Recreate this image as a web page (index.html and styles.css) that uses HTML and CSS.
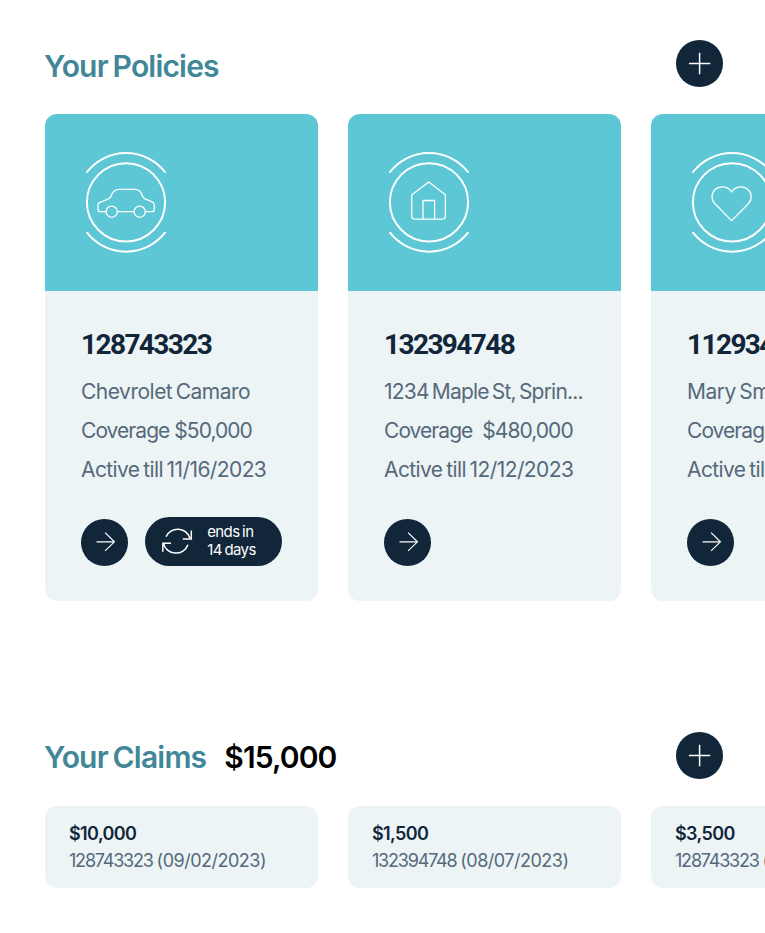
FILE: index.html
```html
<!DOCTYPE html>
<html lang="en">
<head>
  <meta charset="UTF-8" />
  <meta name="viewport" content="width=device-width, initial-scale=1.0" />
  <title>Your Policies</title>
  <link rel="stylesheet" href="styles.css">
</head>
<body>
  <svg class="sprite" aria-hidden="true">
    <symbol id="ring" viewBox="0 0 90 104">
      <circle cx="45" cy="52.3" r="39.1" />
      <path d="M6 22a49.5 49.5 0 0 1 78 0M6 82.7a49.5 49.5 0 0 0 78 0" stroke-linecap="round" />
    </symbol>
    <symbol id="arrow" viewBox="0 0 47 47">
      <path d="M15.7 23H33.5M24.3 13.8L33.7 23L24.3 32.2" />
    </symbol>
    <symbol id="plus" viewBox="0 0 47 47">
      <path d="M13 23.7H34.6M23.8 12.9V34.5" />
    </symbol>
  </svg>

  <main>
    <section class="policies">
      <header class="section-header">
        <h2>Your Policies</h2>
        <button class="round-btn" aria-label="Add policy"><svg><use href="#plus" /></svg></button>
      </header>
      <div class="card-row">
        <article class="policy-card">
          <div class="policy-top">
            <svg class="policy-icon" viewBox="0 0 90 104">
              <use href="#ring" />
              <g class="thin">
                <path d="M25 61.7H19.2Q17 61.7 17 59.5V54.7Q17 53.3 18.5 52.6L27.5 48.8Q29.4 48 30.2 45.8C31.7 41.5 34 39.4 38 39.4H54C58 39.4 60.2 41.5 61.3 45.8Q62 48.1 64 48.9L71.2 51.8Q73.3 52.7 73.3 54.8V59.5Q73.3 61.7 71 61.7H64.5M36.4 61.7H53" />
                <circle cx="30.7" cy="61.7" r="5.6" />
                <circle cx="58.7" cy="61.7" r="5.6" />
              </g>
            </svg>
          </div>
          <div class="policy-body">
            <h3>128743323</h3>
            <p class="name">Chevrolet Camaro</p>
            <p class="coverage">Coverage $50,000</p>
            <p class="active-till">Active till 11/16/2023</p>
            <div class="actions">
              <button class="round-btn" aria-label="Open policy"><svg><use href="#arrow" /></svg></button>
              <button class="renew-btn">
                <svg viewBox="0 0 32 28">
                  <path d="M5 9.8A12.6 11.9 0 0 1 28.9 11M30.3 3.6V12.1H21.8M26.9 17.8A12.6 11.9 0 0 1 2.5 16.3M10 16.3H1.8V24.8" />
                </svg>
                <span>ends in<br>14 days</span>
              </button>
            </div>
          </div>
        </article>

        <article class="policy-card">
          <div class="policy-top">
            <svg class="policy-icon" viewBox="0 0 90 104">
              <use href="#ring" />
              <path class="thin" d="M44.8 32L61.4 44.7V66Q61.4 69.2 58 69.2H31Q27.8 69.2 27.8 66V44.7ZM39 69.2V50.5H50.6V69.2" />
            </svg>
          </div>
          <div class="policy-body">
            <h3>132394748</h3>
            <p class="name address">1234 Maple St, Sprin...</p>
            <p class="coverage">Coverage&nbsp; $480,000</p>
            <p class="active-till">Active till 12/12/2023</p>
            <div class="actions">
              <button class="round-btn" aria-label="Open policy"><svg><use href="#arrow" /></svg></button>
            </div>
          </div>
        </article>

        <article class="policy-card">
          <div class="policy-top">
            <svg class="policy-icon" viewBox="0 0 90 104">
              <use href="#ring" />
              <path class="thin" d="M44.6 70.6L27.9 53.8C23.9 49.5 24.1 43.7 27.7 40C32.5 35.4 40.5 35.8 44.6 42C48.7 35.8 56.7 35.4 61.5 40C65.1 43.7 65.3 49.5 61.3 53.8Z" />
            </svg>
          </div>
          <div class="policy-body">
            <h3>112934857</h3>
            <p class="name">Mary Smith</p>
            <p class="coverage">Coverage $500,000</p>
            <p class="active-till">Active till 12/12/2023</p>
            <div class="actions">
              <button class="round-btn" aria-label="Open policy"><svg><use href="#arrow" /></svg></button>
            </div>
          </div>
        </article>
      </div>
    </section>

    <section class="claims">
      <header class="section-header">
        <h2>Your Claims</h2>
        <strong class="total">$15,000</strong>
        <button class="round-btn" aria-label="Add claim"><svg><use href="#plus" /></svg></button>
      </header>
      <div class="card-row">
        <article class="claim-card">
          <h4>$10,000</h4>
          <p>128743323 <span class="date">(09/02/2023)</span></p>
        </article>
        <article class="claim-card">
          <h4>$1,500</h4>
          <p>132394748 <span class="date">(08/07/2023)</span></p>
        </article>
        <article class="claim-card">
          <h4>$3,500</h4>
          <p>128743323 <span class="date">(06/11/2023)</span></p>
        </article>
      </div>
    </section>
  </main>
</body>
</html>
```
FILE: styles.css
```css
:root {
  --navy: #12263a;
  --teal: #418797;
  --aqua: #5dc7d6;
  --card: #ecf4f6;
  --muted: #56697a;
}
* {
  margin: 0;
  padding: 0;
  box-sizing: border-box;
}
body {
  font-family: Inter, 'Liberation Sans', sans-serif;
  background: #fff;
  color: var(--navy);
  overflow: hidden;
}
.sprite {
  display: none;
}
main {
  padding: 40px 0 0 45px;
  overflow: hidden;
}
svg {
  fill: none;
  stroke: #fff;
}
button {
  border: none;
  color: #fff;
  font-family: inherit;
  background: var(--navy);
  cursor: pointer;
}
.section-header {
  display: flex;
  align-items: center;
  height: 47px;
  margin-bottom: 27px;
  padding-right: 42px;
}
.section-header h2,
.total {
  font-size: 30px;
  font-weight: 600;
  line-height: 47px;
  padding-top: 5px;
}
.claims h2,
.claims .total {
  padding-top: 4px;
}
.section-header h2 {
  color: var(--teal);
  letter-spacing: -0.8px;
  word-spacing: -2px;
  margin-left: -1px;
}
.total {
  color: #000;
  margin-left: 18px;
  letter-spacing: -0.9px;
}
.round-btn {
  flex: none;
  width: 46.6px;
  height: 46.6px;
  border-radius: 50%;
}
.section-header .round-btn {
  margin-left: auto;
}
.round-btn svg {
  display: block;
  width: 100%;
  height: 100%;
  stroke-width: 1.5;
}
.actions .round-btn svg {
  stroke-width: 1.2;
}
.card-row {
  display: flex;
  gap: 30px;
}
.policy-card {
  flex: none;
  width: 273px;
  height: 487px;
  border-radius: 12px;
  background: var(--card);
  overflow: hidden;
}
.policy-top {
  height: 177px;
  padding: 36px;
  background: var(--aqua);
}
.policy-icon {
  display: block;
  width: 90px;
  height: 104px;
  stroke-width: 2;
}
.thin {
  stroke-width: 1.3;
  stroke-linejoin: round;
}
.policy-body {
  padding: 37px 36px 0;
}
.policy-body h3 {
  font-family: Roboto, sans-serif;
  font-size: 28px;
  font-weight: 700;
  line-height: 34px;
  letter-spacing: -1.6px;
  margin-bottom: 10px;
}
.policy-body p {
  color: var(--muted);
  font-size: 21px;
  line-height: 39px;
  white-space: nowrap;
}
.name {
  letter-spacing: -0.5px;
  word-spacing: -2px;
}
.address {
  letter-spacing: -0.8px;
}
.coverage {
  letter-spacing: -0.95px;
}
.active-till {
  letter-spacing: -0.6px;
  word-spacing: -1.6px;
}
.actions {
  display: flex;
  align-items: center;
  gap: 17.6px;
  height: 49px;
  margin-top: 28px;
}
.actions .round-btn {
  position: relative;
  top: 1px;
}
.renew-btn {
  display: flex;
  align-items: center;
  flex: none;
  width: 136.8px;
  height: 48.4px;
  padding-left: 16px;
  border-radius: 25px;
  font-size: 15px;
  line-height: 18px;
  letter-spacing: -0.6px;
  word-spacing: -1px;
  text-align: left;
}
.renew-btn svg {
  width: 32px;
  height: 28px;
  margin-right: 14px;
  stroke-width: 1.5;
}
.claims {
  margin-top: 131px;
}
.claim-card {
  flex: none;
  width: 273px;
  height: 82px;
  padding: 14px 24px 0;
  border-radius: 12px;
  background: var(--card);
  line-height: 27px;
  white-space: nowrap;
}
.claim-card h4 {
  font-size: 18px;
  font-weight: 600;
  letter-spacing: -0.6px;
}
.claim-card p {
  color: var(--muted);
  font-size: 18px;
  letter-spacing: -1.2px;
}
.claim-card .date {
  letter-spacing: -0.5px;
}
```
